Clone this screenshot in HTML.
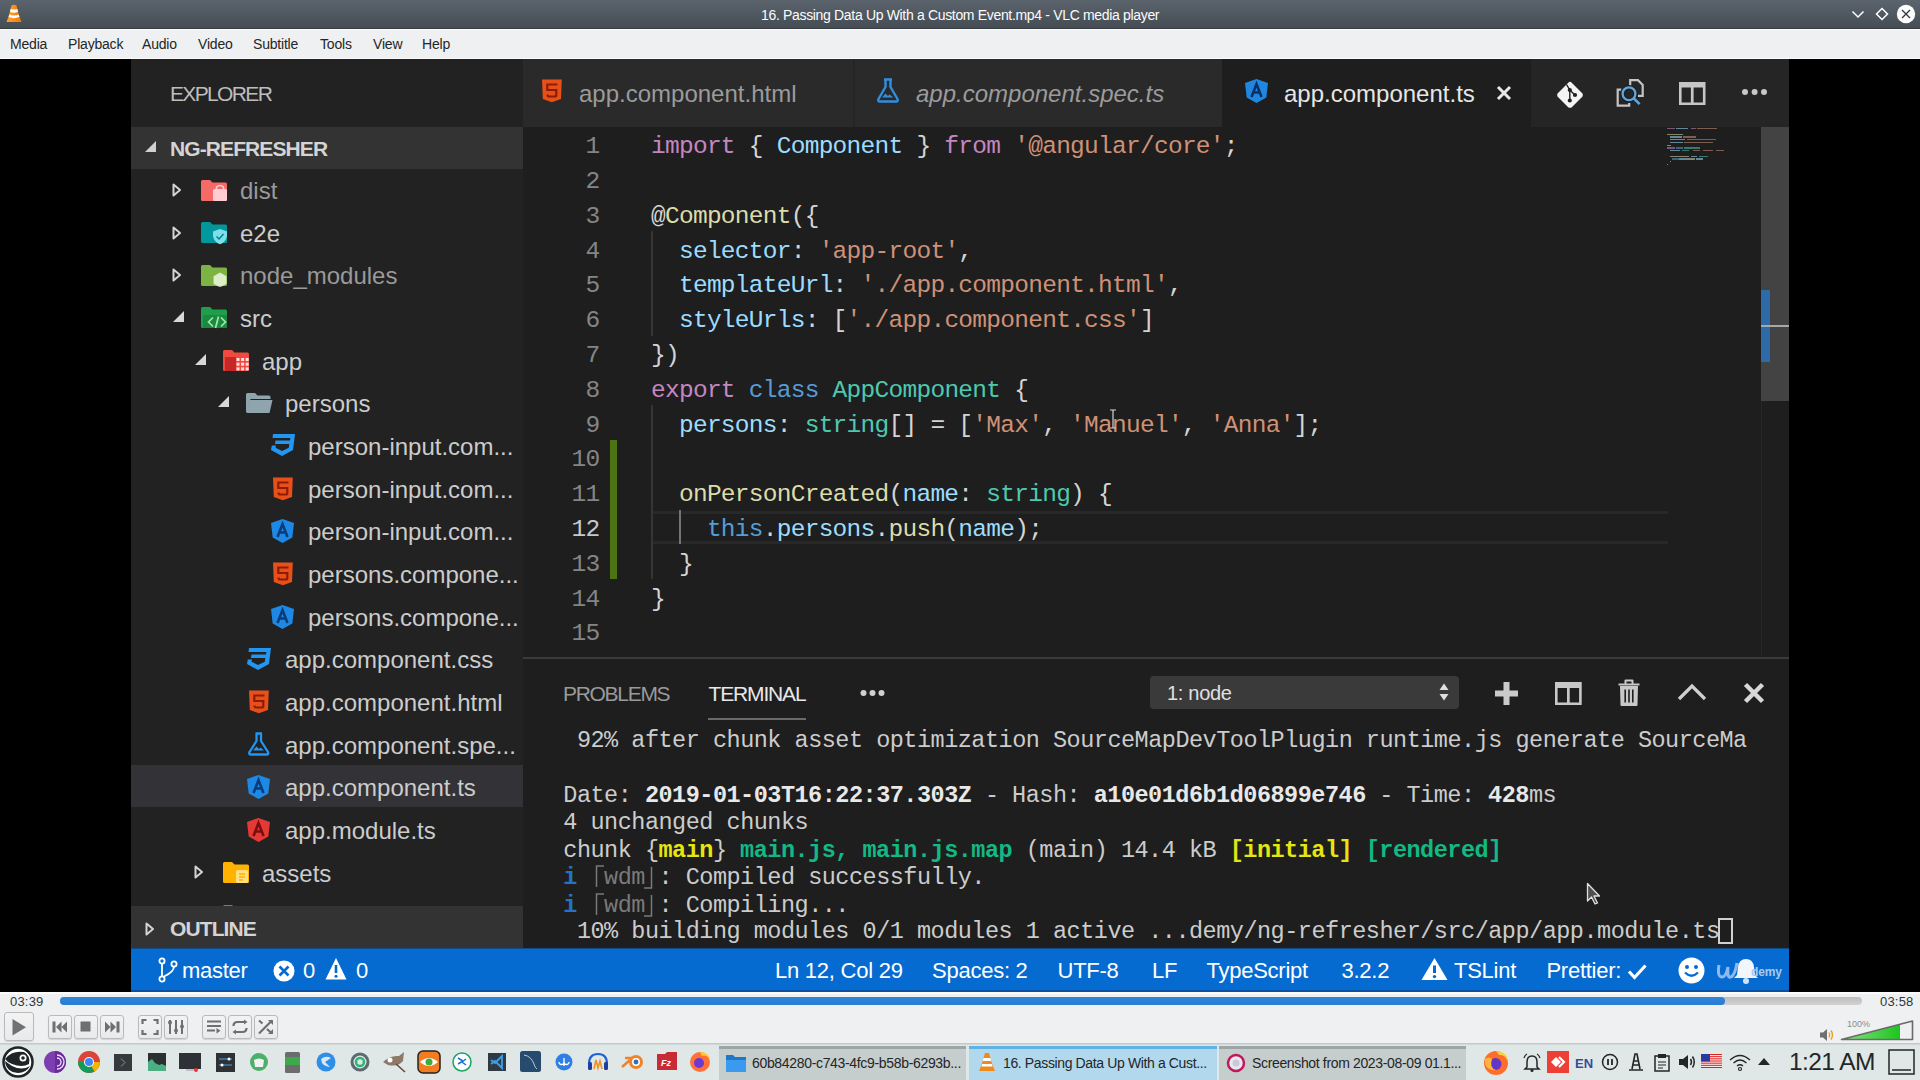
<!DOCTYPE html>
<html><head><meta charset="utf-8">
<style>
*{margin:0;padding:0;box-sizing:border-box}
html,body{width:1920px;height:1080px;overflow:hidden;background:#000;position:relative}
.a{position:absolute;white-space:pre}
.t{font-kerning:normal}
svg.a{overflow:visible}
</style></head><body>
<div class="a" style="left:0px;top:0px;width:1920px;height:29px;background:linear-gradient(#5b646d,#444b53);"></div>
<div class="a" style="left:0px;top:28px;width:1920px;height:1px;background:#383e44;"></div>
<svg class="a" style="left:5px;top:4px;" width="18" height="20" viewBox="0 0 18 20"><defs><linearGradient id="cg" x1="0" x2="1"><stop offset="0" stop-color="#ffa23a"/><stop offset="1" stop-color="#f07a00"/></linearGradient></defs>
<path d="M1.5 18 L4 11.5 L14 11.5 L16.5 18 Z" fill="url(#cg)"/>
<path d="M6.5 1.5 Q9 0 11.5 1.5 L14.5 13 Q9 16 3.5 13 Z" fill="url(#cg)"/>
<path d="M5.7 5 Q9 6.2 12.3 5 L13 8 Q9 9.5 5 8 Z" fill="#fff"/>
<path d="M4.3 10.5 Q9 12.3 13.7 10.5 L14.3 13 Q9 15.3 3.7 13 Z" fill="#fff"/></svg>
<div class="a t" style="left:761px;top:7.65px;font-family:'Liberation Sans',sans-serif;font-size:14px;line-height:14px;color:#fcfcfc;font-weight:normal;letter-spacing:-0.33px;">16. Passing Data Up With a Custom Event.mp4 - VLC media player</div>
<svg class="a" style="left:1850px;top:8px;" width="16" height="12" viewBox="0 0 16 12"><path d="M2.5 3.5 L8 9 L13.5 3.5" stroke="#fff" stroke-width="1.5" fill="none"/></svg>
<svg class="a" style="left:1875px;top:7px;" width="14" height="14" viewBox="0 0 14 14"><path d="M7 1.5 L12.5 7 L7 12.5 L1.5 7 Z" stroke="#fff" stroke-width="1.5" fill="none"/></svg>
<svg class="a" style="left:1896px;top:4px;" width="20" height="20" viewBox="0 0 20 20"><circle cx="10" cy="10" r="9.2" fill="#fcfcfc"/><path d="M6 6 L14 14 M14 6 L6 14" stroke="#31363b" stroke-width="1.3"/></svg>
<div class="a" style="left:0px;top:29px;width:1920px;height:30px;background:#eff0f1;border-top:1px solid #fbfbfb;border-bottom:1px solid #fbfbfb;"></div>
<div class="a t" style="left:10px;top:37.15px;font-family:'Liberation Sans',sans-serif;font-size:14px;line-height:14px;color:#232627;font-weight:normal;letter-spacing:-0.2px;">Media</div>
<div class="a t" style="left:68px;top:37.15px;font-family:'Liberation Sans',sans-serif;font-size:14px;line-height:14px;color:#232627;font-weight:normal;letter-spacing:-0.2px;">Playback</div>
<div class="a t" style="left:142px;top:37.15px;font-family:'Liberation Sans',sans-serif;font-size:14px;line-height:14px;color:#232627;font-weight:normal;letter-spacing:-0.2px;">Audio</div>
<div class="a t" style="left:198px;top:37.15px;font-family:'Liberation Sans',sans-serif;font-size:14px;line-height:14px;color:#232627;font-weight:normal;letter-spacing:-0.2px;">Video</div>
<div class="a t" style="left:253px;top:37.15px;font-family:'Liberation Sans',sans-serif;font-size:14px;line-height:14px;color:#232627;font-weight:normal;letter-spacing:-0.2px;">Subtitle</div>
<div class="a t" style="left:320px;top:37.15px;font-family:'Liberation Sans',sans-serif;font-size:14px;line-height:14px;color:#232627;font-weight:normal;letter-spacing:-0.2px;">Tools</div>
<div class="a t" style="left:373px;top:37.15px;font-family:'Liberation Sans',sans-serif;font-size:14px;line-height:14px;color:#232627;font-weight:normal;letter-spacing:-0.2px;">View</div>
<div class="a t" style="left:422px;top:37.15px;font-family:'Liberation Sans',sans-serif;font-size:14px;line-height:14px;color:#232627;font-weight:normal;letter-spacing:-0.2px;">Help</div>
<div class="a" style="left:131px;top:59px;width:392px;height:889px;background:#222222;"></div>
<div class="a t" style="left:170px;top:83.12px;font-family:'Liberation Sans',sans-serif;font-size:21px;line-height:21px;color:#bdbdbd;font-weight:normal;letter-spacing:-1.65px;">EXPLORER</div>
<div class="a" style="left:131px;top:127px;width:392px;height:42px;background:#333333;"></div>
<svg class="a" style="left:145px;top:141px;" width="12" height="12" viewBox="0 0 12 12"><path d="M11 0 L11 11 L0 11 Z" fill="#d0d0d0"/></svg>
<div class="a t" style="left:170px;top:138.22px;font-family:'Liberation Sans',sans-serif;font-size:21px;line-height:21px;color:#d4d4d4;font-weight:bold;letter-spacing:-0.9px;">NG-REFRESHER</div>
<svg class="a" style="left:172px;top:183.0px;" width="10" height="14" viewBox="0 0 10 14"><path d="M1.5 1.5 L8 7 L1.5 12.5 Z" stroke="#d4d4d4" stroke-width="2" fill="none" stroke-linejoin="round"/></svg>
<svg class="a" style="left:200px;top:178.5px;clip-path:inset(0 0 0 0)" width="28" height="23" viewBox="0 0 28 23"><path d="M1 2.5 Q1 1 2.5 1 L10 1 L12.5 3.5 L25.5 3.5 Q27 3.5 27 5 L27 20.5 Q27 22 25.5 22 L2.5 22 Q1 22 1 20.5 Z" fill="#f56a66"/><rect x="13" y="10" width="14" height="12" rx="1.5" fill="#ffcdd2"/><path d="M16.5 10 L16.5 8 Q20 5 23.5 8 L23.5 10" stroke="#ffcdd2" stroke-width="1.6" fill="none"/></svg>
<div class="a t" style="left:240px;top:179.18px;font-family:'Liberation Sans',sans-serif;font-size:24px;line-height:24px;color:#9a9a9a;font-weight:normal;letter-spacing:0px;">dist</div>
<svg class="a" style="left:172px;top:225.65px;" width="10" height="14" viewBox="0 0 10 14"><path d="M1.5 1.5 L8 7 L1.5 12.5 Z" stroke="#d4d4d4" stroke-width="2" fill="none" stroke-linejoin="round"/></svg>
<svg class="a" style="left:200px;top:221.15px;clip-path:inset(0 0 0 0)" width="28" height="23" viewBox="0 0 28 23"><path d="M1 2.5 Q1 1 2.5 1 L10 1 L12.5 3.5 L25.5 3.5 Q27 3.5 27 5 L27 20.5 Q27 22 25.5 22 L2.5 22 Q1 22 1 20.5 Z" fill="#00979d"/><path d="M20 8 L27 10.5 L27 15 Q26 21 20 23.5 Q14 21 13 15 L13 10.5 Z" fill="#80deea"/><path d="M16.5 15.5 L19 18 L23.5 13" stroke="#00838f" stroke-width="1.5" fill="none"/></svg>
<div class="a t" style="left:240px;top:221.83px;font-family:'Liberation Sans',sans-serif;font-size:24px;line-height:24px;color:#cccccc;font-weight:normal;letter-spacing:0px;">e2e</div>
<svg class="a" style="left:172px;top:268.3px;" width="10" height="14" viewBox="0 0 10 14"><path d="M1.5 1.5 L8 7 L1.5 12.5 Z" stroke="#d4d4d4" stroke-width="2" fill="none" stroke-linejoin="round"/></svg>
<svg class="a" style="left:200px;top:263.8px;clip-path:inset(0 0 0 0)" width="28" height="23" viewBox="0 0 28 23"><path d="M1 2.5 Q1 1 2.5 1 L10 1 L12.5 3.5 L25.5 3.5 Q27 3.5 27 5 L27 20.5 Q27 22 25.5 22 L2.5 22 Q1 22 1 20.5 Z" fill="#7cb342"/><path d="M20 8.5 L26.5 12.3 L26.5 19.7 L20 23.5 L13.5 19.7 L13.5 12.3 Z" fill="#dcedc8"/></svg>
<div class="a t" style="left:240px;top:264.48px;font-family:'Liberation Sans',sans-serif;font-size:24px;line-height:24px;color:#9a9a9a;font-weight:normal;letter-spacing:0px;">node_modules</div>
<svg class="a" style="left:173px;top:310.95px;" width="12" height="12" viewBox="0 0 12 12"><path d="M11 0 L11 11 L0 11 Z" fill="#d8d8d8"/></svg>
<svg class="a" style="left:200px;top:306.45px;clip-path:inset(0 0 0 0)" width="28" height="23" viewBox="0 0 28 23"><path d="M1 2.5 Q1 1 2.5 1 L10 1 L12.5 3.5 L25.5 3.5 Q27 3.5 27 5 L27 20.5 Q27 22 25.5 22 L2.5 22 Q1 22 1 20.5 Z" fill="#1f9e4b"/><path d="M3 9 L27 9 L27 22 L3 22 Z" fill="#1b8a41"/><path d="M13 11.5 L8.5 16 L13 20.5 M21 11.5 L25.5 16 L21 20.5 M18.5 10.5 L15.5 22" stroke="#a5e6a8" stroke-width="1.7" fill="none"/></svg>
<div class="a t" style="left:240px;top:307.13px;font-family:'Liberation Sans',sans-serif;font-size:24px;line-height:24px;color:#cccccc;font-weight:normal;letter-spacing:0px;">src</div>
<svg class="a" style="left:195px;top:353.6px;" width="12" height="12" viewBox="0 0 12 12"><path d="M11 0 L11 11 L0 11 Z" fill="#d8d8d8"/></svg>
<svg class="a" style="left:222px;top:349.1px;clip-path:inset(0 0 0 0)" width="28" height="23" viewBox="0 0 28 23"><path d="M1 2.5 Q1 1 2.5 1 L10 1 L12.5 3.5 L25.5 3.5 Q27 3.5 27 5 L27 20.5 Q27 22 25.5 22 L2.5 22 Q1 22 1 20.5 Z" fill="#ef4a3f"/><path d="M3 8 L14 8 L14 22 L3 22 Z" fill="#c62828"/><rect x="14.5" y="9.0" width="3" height="3" fill="#ffe0e0"/><rect x="19.1" y="9.0" width="3" height="3" fill="#ffe0e0"/><rect x="23.7" y="9.0" width="3" height="3" fill="#ffe0e0"/><rect x="14.5" y="13.7" width="3" height="3" fill="#ffe0e0"/><rect x="19.1" y="13.7" width="3" height="3" fill="#ffe0e0"/><rect x="23.7" y="13.7" width="3" height="3" fill="#ffe0e0"/><rect x="14.5" y="18.4" width="3" height="3" fill="#ffe0e0"/><rect x="19.1" y="18.4" width="3" height="3" fill="#ffe0e0"/><rect x="23.7" y="18.4" width="3" height="3" fill="#ffe0e0"/></svg>
<div class="a t" style="left:262px;top:349.78px;font-family:'Liberation Sans',sans-serif;font-size:24px;line-height:24px;color:#cccccc;font-weight:normal;letter-spacing:0px;">app</div>
<svg class="a" style="left:218px;top:396.25px;" width="12" height="12" viewBox="0 0 12 12"><path d="M11 0 L11 11 L0 11 Z" fill="#d8d8d8"/></svg>
<svg class="a" style="left:245px;top:392.25px;" width="28" height="22" viewBox="0 0 28 22"><path d="M1 2.5 Q1 1 2.5 1 L10 1 L12.5 3.5 L24 3.5 Q25.5 3.5 25.5 5 L25.5 7 L5.5 7 L2.5 20 L1 20 Z" fill="#90a4ae"/><path d="M5 8 L27.5 8 L24.5 21 L1.5 21 Z" fill="#90a4ae"/></svg>
<div class="a t" style="left:285px;top:392.43px;font-family:'Liberation Sans',sans-serif;font-size:24px;line-height:24px;color:#cccccc;font-weight:normal;letter-spacing:0px;">persons</div>
<svg class="a" style="left:270px;top:434.4px;" width="26" height="23" viewBox="0 0 26 23"><path d="M3 0 L25 0 L23 16 L12 22 L1 16 L1.8 11.5 L6 11.5 L5.6 13.8 L12 17 L18.8 13.8 L19.3 10 L5 10 L5.5 6.5 L20 6.5 L20.4 4 L2.5 4 Z" fill="#2196f3"/></svg>
<div class="a t" style="left:308px;top:435.08px;font-family:'Liberation Sans',sans-serif;font-size:24px;line-height:24px;color:#cccccc;font-weight:normal;letter-spacing:0px;">person-input.com...</div>
<svg class="a" style="left:272px;top:476.55px;" width="23" height="24" viewBox="0 0 23 24"><path d="M1 0.6 L20.8 0.6 L20 20 L10.9 23.3 L1.8 20 Z" fill="#e8501a"/><path d="M16.5 5.5 L6.3 5.5 L6.3 11 L15.3 11 L15.3 16 Q15.3 17.5 13.5 17.5 L8.3 17.5 Q6.5 17.5 6.5 15.5" stroke="#8d1c02" stroke-width="2.2" fill="none"/></svg>
<div class="a t" style="left:308px;top:477.73px;font-family:'Liberation Sans',sans-serif;font-size:24px;line-height:24px;color:#cccccc;font-weight:normal;letter-spacing:0px;">person-input.com...</div>
<svg class="a" style="left:271px;top:519.2px;" width="23" height="24" viewBox="0 0 23 24"><path d="M11.5 0 L23 4 L21.3 18.5 L11.5 24 L1.7 18.5 L0 4 Z" fill="#1e88e5"/><path d="M6.5 18 L11.5 5 L16.5 18 M8.3 13.5 L14.7 13.5" stroke="#0a3d7a" stroke-width="2.6" fill="none"/></svg>
<div class="a t" style="left:308px;top:520.38px;font-family:'Liberation Sans',sans-serif;font-size:24px;line-height:24px;color:#cccccc;font-weight:normal;letter-spacing:0px;">person-input.com...</div>
<svg class="a" style="left:272px;top:561.8499999999999px;" width="23" height="24" viewBox="0 0 23 24"><path d="M1 0.6 L20.8 0.6 L20 20 L10.9 23.3 L1.8 20 Z" fill="#e8501a"/><path d="M16.5 5.5 L6.3 5.5 L6.3 11 L15.3 11 L15.3 16 Q15.3 17.5 13.5 17.5 L8.3 17.5 Q6.5 17.5 6.5 15.5" stroke="#8d1c02" stroke-width="2.2" fill="none"/></svg>
<div class="a t" style="left:308px;top:563.03px;font-family:'Liberation Sans',sans-serif;font-size:24px;line-height:24px;color:#cccccc;font-weight:normal;letter-spacing:0px;">persons.compone...</div>
<svg class="a" style="left:271px;top:604.5px;" width="23" height="24" viewBox="0 0 23 24"><path d="M11.5 0 L23 4 L21.3 18.5 L11.5 24 L1.7 18.5 L0 4 Z" fill="#1e88e5"/><path d="M6.5 18 L11.5 5 L16.5 18 M8.3 13.5 L14.7 13.5" stroke="#0a3d7a" stroke-width="2.6" fill="none"/></svg>
<div class="a t" style="left:308px;top:605.68px;font-family:'Liberation Sans',sans-serif;font-size:24px;line-height:24px;color:#cccccc;font-weight:normal;letter-spacing:0px;">persons.compone...</div>
<svg class="a" style="left:246px;top:647.65px;" width="26" height="23" viewBox="0 0 26 23"><path d="M3 0 L25 0 L23 16 L12 22 L1 16 L1.8 11.5 L6 11.5 L5.6 13.8 L12 17 L18.8 13.8 L19.3 10 L5 10 L5.5 6.5 L20 6.5 L20.4 4 L2.5 4 Z" fill="#2196f3"/></svg>
<div class="a t" style="left:285px;top:648.33px;font-family:'Liberation Sans',sans-serif;font-size:24px;line-height:24px;color:#cccccc;font-weight:normal;letter-spacing:0px;">app.component.css</div>
<svg class="a" style="left:248px;top:689.8px;" width="23" height="24" viewBox="0 0 23 24"><path d="M1 0.6 L20.8 0.6 L20 20 L10.9 23.3 L1.8 20 Z" fill="#e8501a"/><path d="M16.5 5.5 L6.3 5.5 L6.3 11 L15.3 11 L15.3 16 Q15.3 17.5 13.5 17.5 L8.3 17.5 Q6.5 17.5 6.5 15.5" stroke="#8d1c02" stroke-width="2.2" fill="none"/></svg>
<div class="a t" style="left:285px;top:690.98px;font-family:'Liberation Sans',sans-serif;font-size:24px;line-height:24px;color:#cccccc;font-weight:normal;letter-spacing:0px;">app.component.html</div>
<svg class="a" style="left:247px;top:732.4499999999999px;" width="23" height="24" viewBox="0 0 23 24"><path d="M8.5 1.5 L15 1.5 M9.5 1.5 L9.5 9 L2.5 20 Q1.5 22.5 4 22.5 L19.5 22.5 Q22 22.5 21 20 L14 9 L14 1.5" stroke="#2196f3" stroke-width="2.3" fill="none" stroke-linejoin="round"/><path d="M6 18.5 L9.5 14.5 L12 17 L13.5 15.5 L17 18.5 Z" fill="#2196f3"/></svg>
<div class="a t" style="left:285px;top:733.63px;font-family:'Liberation Sans',sans-serif;font-size:24px;line-height:24px;color:#cccccc;font-weight:normal;letter-spacing:0px;">app.component.spe...</div>
<div class="a" style="left:131px;top:765px;width:392px;height:42px;background:#333337;"></div>
<svg class="a" style="left:247px;top:775.1px;" width="23" height="24" viewBox="0 0 23 24"><path d="M11.5 0 L23 4 L21.3 18.5 L11.5 24 L1.7 18.5 L0 4 Z" fill="#1e88e5"/><path d="M6.5 18 L11.5 5 L16.5 18 M8.3 13.5 L14.7 13.5" stroke="#0a3d7a" stroke-width="2.6" fill="none"/></svg>
<div class="a t" style="left:285px;top:776.28px;font-family:'Liberation Sans',sans-serif;font-size:24px;line-height:24px;color:#cccccc;font-weight:normal;letter-spacing:0px;">app.component.ts</div>
<svg class="a" style="left:247px;top:817.75px;" width="23" height="24" viewBox="0 0 23 24"><path d="M11.5 0 L23 4 L21.3 18.5 L11.5 24 L1.7 18.5 L0 4 Z" fill="#e53935"/><path d="M6.5 18 L11.5 5 L16.5 18 M8.3 13.5 L14.7 13.5" stroke="#7a0d0d" stroke-width="2.6" fill="none"/></svg>
<div class="a t" style="left:285px;top:818.93px;font-family:'Liberation Sans',sans-serif;font-size:24px;line-height:24px;color:#cccccc;font-weight:normal;letter-spacing:0px;">app.module.ts</div>
<svg class="a" style="left:194px;top:865.4px;" width="10" height="14" viewBox="0 0 10 14"><path d="M1.5 1.5 L8 7 L1.5 12.5 Z" stroke="#d4d4d4" stroke-width="2" fill="none" stroke-linejoin="round"/></svg>
<svg class="a" style="left:222px;top:860.9px;clip-path:inset(0 0 0 0)" width="28" height="23" viewBox="0 0 28 23"><path d="M1 2.5 Q1 1 2.5 1 L10 1 L12.5 3.5 L25.5 3.5 Q27 3.5 27 5 L27 20.5 Q27 22 25.5 22 L2.5 22 Q1 22 1 20.5 Z" fill="#ffb300"/><rect x="14" y="9" width="12" height="13" rx="1.5" fill="#ffe082"/><path d="M17 13 L23 13 M17 16 L23 16 M17 19 L21 19" stroke="#ffb300" stroke-width="1.3"/></svg>
<div class="a t" style="left:262px;top:861.58px;font-family:'Liberation Sans',sans-serif;font-size:24px;line-height:24px;color:#cccccc;font-weight:normal;letter-spacing:0px;">assets</div>
<svg class="a" style="left:194px;top:908.05px;" width="10" height="14" viewBox="0 0 10 14"><path d="M1.5 1.5 L8 7 L1.5 12.5 Z" stroke="#d4d4d4" stroke-width="2" fill="none" stroke-linejoin="round"/></svg>
<svg class="a" style="left:222px;top:903.55px;" width="28" height="23" viewBox="0 0 28 23"><path d="M1 2.5 Q1 1 2.5 1 L10 1 L12.5 3.5 L25.5 3.5 Q27 3.5 27 5 L27 20.5 Q27 22 25.5 22 L2.5 22 Q1 22 1 20.5 Z" fill="#43a047"/></svg>
<div class="a t" style="left:262px;top:904.23px;font-family:'Liberation Sans',sans-serif;font-size:24px;line-height:24px;color:#cccccc;font-weight:normal;letter-spacing:0px;">environments</div>
<div class="a" style="left:131px;top:906px;width:392px;height:42px;background:#333333;"></div>
<svg class="a" style="left:145px;top:922px;" width="10" height="14" viewBox="0 0 10 14"><path d="M1.5 1.5 L8 7 L1.5 12.5 Z" stroke="#d4d4d4" stroke-width="2" fill="none" stroke-linejoin="round"/></svg>
<div class="a t" style="left:170px;top:917.62px;font-family:'Liberation Sans',sans-serif;font-size:21px;line-height:21px;color:#d4d4d4;font-weight:bold;letter-spacing:-0.9px;">OUTLINE</div>
<div class="a" style="left:523px;top:59px;width:1266px;height:68px;background:#252526;"></div>
<div class="a" style="left:523px;top:59px;width:330px;height:68px;background:#2a2a2a;"></div>
<div class="a" style="left:853px;top:59px;width:2px;height:68px;background:#242424;"></div>
<div class="a" style="left:855px;top:59px;width:367px;height:68px;background:#2a2a2a;"></div>
<div class="a" style="left:1222px;top:59px;width:309px;height:68px;background:#1e1e1e;"></div>
<svg class="a" style="left:541px;top:79px;" width="23" height="24" viewBox="0 0 23 24"><path d="M1 0.6 L20.8 0.6 L20 20 L10.9 23.3 L1.8 20 Z" fill="#e8501a"/><path d="M16.5 5.5 L6.3 5.5 L6.3 11 L15.3 11 L15.3 16 Q15.3 17.5 13.5 17.5 L8.3 17.5 Q6.5 17.5 6.5 15.5" stroke="#8d1c02" stroke-width="2.2" fill="none"/></svg>
<div class="a t" style="left:579px;top:82.48px;font-family:'Liberation Sans',sans-serif;font-size:24px;line-height:24px;color:#9b9b9b;font-weight:normal;letter-spacing:0px;">app.component.html</div>
<svg class="a" style="left:876px;top:78px;" width="24" height="26" viewBox="0 0 24 26"><path d="M8 1.5 L16 1.5 M9.5 1.5 L9.5 9 L2.5 21 Q1.5 23.5 4 23.5 L20 23.5 Q22.5 23.5 21.5 21 L14.5 9 L14.5 1.5" stroke="#2f8fe0" stroke-width="2.4" fill="none" stroke-linejoin="round"/><path d="M6 19.5 L9.5 15.5 L12 18 L13.5 16.5 L17.5 19.5 Z" fill="#2f8fe0"/></svg>
<div class="a t" style="left:916px;top:82.48px;font-family:'Liberation Sans',sans-serif;font-size:24px;line-height:24px;color:#9b9b9b;font-weight:normal;letter-spacing:0px;font-style:italic;">app.component.spec.ts</div>
<svg class="a" style="left:1245px;top:79px;" width="23" height="25" viewBox="0 0 23 25"><path d="M11.5 0 L23 4 L21.3 18.5 L11.5 24 L1.7 18.5 L0 4 Z" fill="#1f87e0"/><path d="M6.5 18 L11.5 5 L16.5 18 M8.3 13.5 L14.7 13.5" stroke="#0b2f66" stroke-width="2.6" fill="none"/></svg>
<div class="a t" style="left:1284px;top:82.48px;font-family:'Liberation Sans',sans-serif;font-size:24px;line-height:24px;color:#e6e6e6;font-weight:normal;letter-spacing:0px;">app.component.ts</div>
<svg class="a" style="left:1496px;top:85px;" width="16" height="16" viewBox="0 0 16 16"><path d="M2 2 L14 14 M14 2 L2 14" stroke="#e8e8e8" stroke-width="3"/></svg>
<svg class="a" style="left:1556px;top:81px;" width="28" height="28" viewBox="0 0 28 28"><path d="M14 0.8 Q14.8 0.8 15.5 1.5 L26.5 12.5 Q27.2 14 26.5 15.5 L15.5 26.5 Q14 27.2 12.5 26.5 L1.5 15.5 Q0.8 14 1.5 12.5 L12.5 1.5 Q13.2 0.8 14 0.8 Z" fill="#f4f4f4"/><path d="M10.5 3.5 L13.8 9 L13.8 19.5 M13.8 9 L19 14" stroke="#222" stroke-width="1.4" fill="none"/><circle cx="13.8" cy="9" r="2.1" fill="#222"/><circle cx="13.8" cy="19.5" r="2.1" fill="#222"/><circle cx="19" cy="14" r="2.1" fill="#222"/></svg>
<svg class="a" style="left:1615px;top:79px;" width="30" height="28" viewBox="0 0 30 28"><path d="M15.2 6.4 L15.2 1.2 L23 1.2 L27.7 5.9 L27.7 16.8 L23 16.8 M6.4 10.6 L2.7 10.6 L2.7 26.7 L14.2 26.7 L14.2 24.1" stroke="#c4c4c4" stroke-width="2.2" fill="none"/><circle cx="14" cy="14.7" r="6.4" stroke="#1f1f1f" stroke-width="4.5" fill="none"/><circle cx="14" cy="14.7" r="6.4" stroke="#5ea6e0" stroke-width="2.3" fill="none"/><path d="M18.8 19.4 L24.6 25.2" stroke="#5ea6e0" stroke-width="2.6"/></svg>
<svg class="a" style="left:1679px;top:81.6px;" width="27" height="23" viewBox="0 0 27 23"><path fill-rule="evenodd" d="M0 0 H26.5 V23 H0 Z M2.6 5.6 V20.4 H11.9 V5.6 Z M14.6 5.6 V20.4 H23.9 V5.6 Z" fill="#c6c6c6"/></svg>
<svg class="a" style="left:1741px;top:86px;" width="28" height="12" viewBox="0 0 28 12"><circle cx="4" cy="6" r="3" fill="#c8c8c8"/><circle cx="13.6" cy="6" r="3" fill="#c8c8c8"/><circle cx="23" cy="6" r="3" fill="#c8c8c8"/></svg>
<div class="a" style="left:523px;top:127px;width:1266px;height:530px;background:#1e1e1e;"></div>
<div class="a" style="left:651px;top:510.5px;width:1017px;height:3px;background:#282828;"></div>
<div class="a" style="left:651px;top:541px;width:1017px;height:3px;background:#282828;"></div>
<div class="a" style="left:651px;top:231.39999999999998px;width:2px;height:104.39999999999999px;background:#353535;"></div>
<div class="a" style="left:651px;top:405.4px;width:2px;height:174.0px;background:#353535;"></div>
<div class="a" style="left:679px;top:510px;width:2px;height:34px;background:#737373;"></div>
<div class="a" style="left:610px;top:440.2px;width:7px;height:139.2px;background:#4d7413;"></div>
<div class="a t" style="left:585.53px;top:135.12px;font-family:'Liberation Mono',monospace;font-size:24.5px;line-height:24.5px;color:#858585;font-weight:normal;letter-spacing:-0.73px;">1</div>
<div class="a t" style="left:651px;top:135.12px;font-family:'Liberation Mono',monospace;font-size:24.5px;line-height:24.5px;color:#c586c0;font-weight:normal;letter-spacing:-0.73px;">import</div>
<div class="a t" style="left:734.82px;top:135.12px;font-family:'Liberation Mono',monospace;font-size:24.5px;line-height:24.5px;color:#d4d4d4;font-weight:normal;letter-spacing:-0.73px;"> { </div>
<div class="a t" style="left:776.73px;top:135.12px;font-family:'Liberation Mono',monospace;font-size:24.5px;line-height:24.5px;color:#9cdcfe;font-weight:normal;letter-spacing:-0.73px;">Component</div>
<div class="a t" style="left:902.46px;top:135.12px;font-family:'Liberation Mono',monospace;font-size:24.5px;line-height:24.5px;color:#d4d4d4;font-weight:normal;letter-spacing:-0.73px;"> } </div>
<div class="a t" style="left:944.37px;top:135.12px;font-family:'Liberation Mono',monospace;font-size:24.5px;line-height:24.5px;color:#c586c0;font-weight:normal;letter-spacing:-0.73px;">from</div>
<div class="a t" style="left:1000.25px;top:135.12px;font-family:'Liberation Mono',monospace;font-size:24.5px;line-height:24.5px;color:#d4d4d4;font-weight:normal;letter-spacing:-0.73px;"> </div>
<div class="a t" style="left:1014.22px;top:135.12px;font-family:'Liberation Mono',monospace;font-size:24.5px;line-height:24.5px;color:#ce9178;font-weight:normal;letter-spacing:-0.73px;">&#x27;@angular/core&#x27;</div>
<div class="a t" style="left:1223.77px;top:135.12px;font-family:'Liberation Mono',monospace;font-size:24.5px;line-height:24.5px;color:#d4d4d4;font-weight:normal;letter-spacing:-0.73px;">;</div>
<div class="a t" style="left:585.53px;top:169.92px;font-family:'Liberation Mono',monospace;font-size:24.5px;line-height:24.5px;color:#858585;font-weight:normal;letter-spacing:-0.73px;">2</div>
<div class="a t" style="left:585.53px;top:204.72px;font-family:'Liberation Mono',monospace;font-size:24.5px;line-height:24.5px;color:#858585;font-weight:normal;letter-spacing:-0.73px;">3</div>
<div class="a t" style="left:651px;top:204.72px;font-family:'Liberation Mono',monospace;font-size:24.5px;line-height:24.5px;color:#d4d4d4;font-weight:normal;letter-spacing:-0.73px;">@</div>
<div class="a t" style="left:664.97px;top:204.72px;font-family:'Liberation Mono',monospace;font-size:24.5px;line-height:24.5px;color:#dcdcaa;font-weight:normal;letter-spacing:-0.73px;">Component</div>
<div class="a t" style="left:790.7px;top:204.72px;font-family:'Liberation Mono',monospace;font-size:24.5px;line-height:24.5px;color:#d4d4d4;font-weight:normal;letter-spacing:-0.73px;">({</div>
<div class="a t" style="left:585.53px;top:239.52px;font-family:'Liberation Mono',monospace;font-size:24.5px;line-height:24.5px;color:#858585;font-weight:normal;letter-spacing:-0.73px;">4</div>
<div class="a t" style="left:651px;top:239.52px;font-family:'Liberation Mono',monospace;font-size:24.5px;line-height:24.5px;color:#9cdcfe;font-weight:normal;letter-spacing:-0.73px;">  selector</div>
<div class="a t" style="left:790.7px;top:239.52px;font-family:'Liberation Mono',monospace;font-size:24.5px;line-height:24.5px;color:#d4d4d4;font-weight:normal;letter-spacing:-0.73px;">: </div>
<div class="a t" style="left:818.64px;top:239.52px;font-family:'Liberation Mono',monospace;font-size:24.5px;line-height:24.5px;color:#ce9178;font-weight:normal;letter-spacing:-0.73px;">&#x27;app-root&#x27;</div>
<div class="a t" style="left:958.34px;top:239.52px;font-family:'Liberation Mono',monospace;font-size:24.5px;line-height:24.5px;color:#d4d4d4;font-weight:normal;letter-spacing:-0.73px;">,</div>
<div class="a t" style="left:585.53px;top:274.32px;font-family:'Liberation Mono',monospace;font-size:24.5px;line-height:24.5px;color:#858585;font-weight:normal;letter-spacing:-0.73px;">5</div>
<div class="a t" style="left:651px;top:274.32px;font-family:'Liberation Mono',monospace;font-size:24.5px;line-height:24.5px;color:#9cdcfe;font-weight:normal;letter-spacing:-0.73px;">  templateUrl</div>
<div class="a t" style="left:832.61px;top:274.32px;font-family:'Liberation Mono',monospace;font-size:24.5px;line-height:24.5px;color:#d4d4d4;font-weight:normal;letter-spacing:-0.73px;">: </div>
<div class="a t" style="left:860.55px;top:274.32px;font-family:'Liberation Mono',monospace;font-size:24.5px;line-height:24.5px;color:#ce9178;font-weight:normal;letter-spacing:-0.73px;">&#x27;./app.component.html&#x27;</div>
<div class="a t" style="left:1167.89px;top:274.32px;font-family:'Liberation Mono',monospace;font-size:24.5px;line-height:24.5px;color:#d4d4d4;font-weight:normal;letter-spacing:-0.73px;">,</div>
<div class="a t" style="left:585.53px;top:309.12px;font-family:'Liberation Mono',monospace;font-size:24.5px;line-height:24.5px;color:#858585;font-weight:normal;letter-spacing:-0.73px;">6</div>
<div class="a t" style="left:651px;top:309.12px;font-family:'Liberation Mono',monospace;font-size:24.5px;line-height:24.5px;color:#9cdcfe;font-weight:normal;letter-spacing:-0.73px;">  styleUrls</div>
<div class="a t" style="left:804.67px;top:309.12px;font-family:'Liberation Mono',monospace;font-size:24.5px;line-height:24.5px;color:#d4d4d4;font-weight:normal;letter-spacing:-0.73px;">: [</div>
<div class="a t" style="left:846.58px;top:309.12px;font-family:'Liberation Mono',monospace;font-size:24.5px;line-height:24.5px;color:#ce9178;font-weight:normal;letter-spacing:-0.73px;">&#x27;./app.component.css&#x27;</div>
<div class="a t" style="left:1139.95px;top:309.12px;font-family:'Liberation Mono',monospace;font-size:24.5px;line-height:24.5px;color:#d4d4d4;font-weight:normal;letter-spacing:-0.73px;">]</div>
<div class="a t" style="left:585.53px;top:343.92px;font-family:'Liberation Mono',monospace;font-size:24.5px;line-height:24.5px;color:#858585;font-weight:normal;letter-spacing:-0.73px;">7</div>
<div class="a t" style="left:651px;top:343.92px;font-family:'Liberation Mono',monospace;font-size:24.5px;line-height:24.5px;color:#d4d4d4;font-weight:normal;letter-spacing:-0.73px;">})</div>
<div class="a t" style="left:585.53px;top:378.72px;font-family:'Liberation Mono',monospace;font-size:24.5px;line-height:24.5px;color:#858585;font-weight:normal;letter-spacing:-0.73px;">8</div>
<div class="a t" style="left:651px;top:378.72px;font-family:'Liberation Mono',monospace;font-size:24.5px;line-height:24.5px;color:#c586c0;font-weight:normal;letter-spacing:-0.73px;">export</div>
<div class="a t" style="left:734.82px;top:378.72px;font-family:'Liberation Mono',monospace;font-size:24.5px;line-height:24.5px;color:#d4d4d4;font-weight:normal;letter-spacing:-0.73px;"> </div>
<div class="a t" style="left:748.79px;top:378.72px;font-family:'Liberation Mono',monospace;font-size:24.5px;line-height:24.5px;color:#569cd6;font-weight:normal;letter-spacing:-0.73px;">class</div>
<div class="a t" style="left:818.64px;top:378.72px;font-family:'Liberation Mono',monospace;font-size:24.5px;line-height:24.5px;color:#d4d4d4;font-weight:normal;letter-spacing:-0.73px;"> </div>
<div class="a t" style="left:832.61px;top:378.72px;font-family:'Liberation Mono',monospace;font-size:24.5px;line-height:24.5px;color:#4ec9b0;font-weight:normal;letter-spacing:-0.73px;">AppComponent</div>
<div class="a t" style="left:1000.25px;top:378.72px;font-family:'Liberation Mono',monospace;font-size:24.5px;line-height:24.5px;color:#d4d4d4;font-weight:normal;letter-spacing:-0.73px;"> {</div>
<div class="a t" style="left:585.53px;top:413.52px;font-family:'Liberation Mono',monospace;font-size:24.5px;line-height:24.5px;color:#858585;font-weight:normal;letter-spacing:-0.73px;">9</div>
<div class="a t" style="left:651px;top:413.52px;font-family:'Liberation Mono',monospace;font-size:24.5px;line-height:24.5px;color:#9cdcfe;font-weight:normal;letter-spacing:-0.73px;">  persons</div>
<div class="a t" style="left:776.73px;top:413.52px;font-family:'Liberation Mono',monospace;font-size:24.5px;line-height:24.5px;color:#d4d4d4;font-weight:normal;letter-spacing:-0.73px;">: </div>
<div class="a t" style="left:804.67px;top:413.52px;font-family:'Liberation Mono',monospace;font-size:24.5px;line-height:24.5px;color:#4ec9b0;font-weight:normal;letter-spacing:-0.73px;">string</div>
<div class="a t" style="left:888.49px;top:413.52px;font-family:'Liberation Mono',monospace;font-size:24.5px;line-height:24.5px;color:#d4d4d4;font-weight:normal;letter-spacing:-0.73px;">[] = [</div>
<div class="a t" style="left:972.31px;top:413.52px;font-family:'Liberation Mono',monospace;font-size:24.5px;line-height:24.5px;color:#ce9178;font-weight:normal;letter-spacing:-0.73px;">&#x27;Max&#x27;</div>
<div class="a t" style="left:1042.16px;top:413.52px;font-family:'Liberation Mono',monospace;font-size:24.5px;line-height:24.5px;color:#d4d4d4;font-weight:normal;letter-spacing:-0.73px;">, </div>
<div class="a t" style="left:1070.1px;top:413.52px;font-family:'Liberation Mono',monospace;font-size:24.5px;line-height:24.5px;color:#ce9178;font-weight:normal;letter-spacing:-0.73px;">&#x27;Manuel&#x27;</div>
<div class="a t" style="left:1181.86px;top:413.52px;font-family:'Liberation Mono',monospace;font-size:24.5px;line-height:24.5px;color:#d4d4d4;font-weight:normal;letter-spacing:-0.73px;">, </div>
<div class="a t" style="left:1209.8px;top:413.52px;font-family:'Liberation Mono',monospace;font-size:24.5px;line-height:24.5px;color:#ce9178;font-weight:normal;letter-spacing:-0.73px;">&#x27;Anna&#x27;</div>
<div class="a t" style="left:1293.62px;top:413.52px;font-family:'Liberation Mono',monospace;font-size:24.5px;line-height:24.5px;color:#d4d4d4;font-weight:normal;letter-spacing:-0.73px;">];</div>
<div class="a t" style="left:571.56px;top:448.32px;font-family:'Liberation Mono',monospace;font-size:24.5px;line-height:24.5px;color:#858585;font-weight:normal;letter-spacing:-0.73px;">10</div>
<div class="a t" style="left:571.56px;top:483.12px;font-family:'Liberation Mono',monospace;font-size:24.5px;line-height:24.5px;color:#858585;font-weight:normal;letter-spacing:-0.73px;">11</div>
<div class="a t" style="left:651px;top:483.12px;font-family:'Liberation Mono',monospace;font-size:24.5px;line-height:24.5px;color:#dcdcaa;font-weight:normal;letter-spacing:-0.73px;">  onPersonCreated</div>
<div class="a t" style="left:888.49px;top:483.12px;font-family:'Liberation Mono',monospace;font-size:24.5px;line-height:24.5px;color:#d4d4d4;font-weight:normal;letter-spacing:-0.73px;">(</div>
<div class="a t" style="left:902.46px;top:483.12px;font-family:'Liberation Mono',monospace;font-size:24.5px;line-height:24.5px;color:#9cdcfe;font-weight:normal;letter-spacing:-0.73px;">name</div>
<div class="a t" style="left:958.34px;top:483.12px;font-family:'Liberation Mono',monospace;font-size:24.5px;line-height:24.5px;color:#d4d4d4;font-weight:normal;letter-spacing:-0.73px;">: </div>
<div class="a t" style="left:986.28px;top:483.12px;font-family:'Liberation Mono',monospace;font-size:24.5px;line-height:24.5px;color:#4ec9b0;font-weight:normal;letter-spacing:-0.73px;">string</div>
<div class="a t" style="left:1070.1px;top:483.12px;font-family:'Liberation Mono',monospace;font-size:24.5px;line-height:24.5px;color:#d4d4d4;font-weight:normal;letter-spacing:-0.73px;">) {</div>
<div class="a t" style="left:571.56px;top:517.92px;font-family:'Liberation Mono',monospace;font-size:24.5px;line-height:24.5px;color:#c8c8c8;font-weight:normal;letter-spacing:-0.73px;">12</div>
<div class="a t" style="left:651px;top:517.92px;font-family:'Liberation Mono',monospace;font-size:24.5px;line-height:24.5px;color:#569cd6;font-weight:normal;letter-spacing:-0.73px;">    this</div>
<div class="a t" style="left:762.76px;top:517.92px;font-family:'Liberation Mono',monospace;font-size:24.5px;line-height:24.5px;color:#d4d4d4;font-weight:normal;letter-spacing:-0.73px;">.</div>
<div class="a t" style="left:776.73px;top:517.92px;font-family:'Liberation Mono',monospace;font-size:24.5px;line-height:24.5px;color:#9cdcfe;font-weight:normal;letter-spacing:-0.73px;">persons</div>
<div class="a t" style="left:874.52px;top:517.92px;font-family:'Liberation Mono',monospace;font-size:24.5px;line-height:24.5px;color:#d4d4d4;font-weight:normal;letter-spacing:-0.73px;">.</div>
<div class="a t" style="left:888.49px;top:517.92px;font-family:'Liberation Mono',monospace;font-size:24.5px;line-height:24.5px;color:#dcdcaa;font-weight:normal;letter-spacing:-0.73px;">push</div>
<div class="a t" style="left:944.37px;top:517.92px;font-family:'Liberation Mono',monospace;font-size:24.5px;line-height:24.5px;color:#d4d4d4;font-weight:normal;letter-spacing:-0.73px;">(</div>
<div class="a t" style="left:958.34px;top:517.92px;font-family:'Liberation Mono',monospace;font-size:24.5px;line-height:24.5px;color:#9cdcfe;font-weight:normal;letter-spacing:-0.73px;">name</div>
<div class="a t" style="left:1014.22px;top:517.92px;font-family:'Liberation Mono',monospace;font-size:24.5px;line-height:24.5px;color:#d4d4d4;font-weight:normal;letter-spacing:-0.73px;">);</div>
<div class="a t" style="left:571.56px;top:552.72px;font-family:'Liberation Mono',monospace;font-size:24.5px;line-height:24.5px;color:#858585;font-weight:normal;letter-spacing:-0.73px;">13</div>
<div class="a t" style="left:651px;top:552.72px;font-family:'Liberation Mono',monospace;font-size:24.5px;line-height:24.5px;color:#d4d4d4;font-weight:normal;letter-spacing:-0.73px;">  }</div>
<div class="a t" style="left:571.56px;top:587.52px;font-family:'Liberation Mono',monospace;font-size:24.5px;line-height:24.5px;color:#858585;font-weight:normal;letter-spacing:-0.73px;">14</div>
<div class="a t" style="left:651px;top:587.52px;font-family:'Liberation Mono',monospace;font-size:24.5px;line-height:24.5px;color:#d4d4d4;font-weight:normal;letter-spacing:-0.73px;">}</div>
<div class="a t" style="left:571.56px;top:622.32px;font-family:'Liberation Mono',monospace;font-size:24.5px;line-height:24.5px;color:#858585;font-weight:normal;letter-spacing:-0.73px;">15</div>
<svg class="a" style="left:1109px;top:409px;" width="8" height="20" viewBox="0 0 8 20"><path d="M1 1 L7 1 M4 1 L4 19 M1 19 L7 19" stroke="#d4d4d4" stroke-width="1.2"/></svg>
<div class="a" style="left:1667.0px;top:128.0px;width:7.92px;height:1.4px;background:#c586c0;opacity:0.55;"></div>
<div class="a" style="left:1676.24px;top:128.0px;width:11.88px;height:1.4px;background:#9cdcfe;opacity:0.55;"></div>
<div class="a" style="left:1690.76px;top:128.0px;width:5.28px;height:1.4px;background:#c586c0;opacity:0.55;"></div>
<div class="a" style="left:1697.36px;top:128.0px;width:19.8px;height:1.4px;background:#ce9178;opacity:0.55;"></div>
<div class="a" style="left:1667.0px;top:133.5px;width:15.84px;height:1.4px;background:#dcdcaa;opacity:0.55;"></div>
<div class="a" style="left:1669.64px;top:136.25px;width:11.88px;height:1.4px;background:#9cdcfe;opacity:0.55;"></div>
<div class="a" style="left:1682.84px;top:136.25px;width:13.200000000000001px;height:1.4px;background:#ce9178;opacity:0.55;"></div>
<div class="a" style="left:1669.64px;top:139.0px;width:15.84px;height:1.4px;background:#9cdcfe;opacity:0.55;"></div>
<div class="a" style="left:1686.8px;top:139.0px;width:29.040000000000003px;height:1.4px;background:#ce9178;opacity:0.55;"></div>
<div class="a" style="left:1669.64px;top:141.75px;width:13.200000000000001px;height:1.4px;background:#9cdcfe;opacity:0.55;"></div>
<div class="a" style="left:1684.16px;top:141.75px;width:29.040000000000003px;height:1.4px;background:#ce9178;opacity:0.55;"></div>
<div class="a" style="left:1667.0px;top:144.5px;width:3.96px;height:1.4px;background:#d4d4d4;opacity:0.55;"></div>
<div class="a" style="left:1667.0px;top:147.25px;width:7.92px;height:1.4px;background:#c586c0;opacity:0.55;"></div>
<div class="a" style="left:1676.24px;top:147.25px;width:6.6000000000000005px;height:1.4px;background:#569cd6;opacity:0.55;"></div>
<div class="a" style="left:1684.16px;top:147.25px;width:15.84px;height:1.4px;background:#4ec9b0;opacity:0.55;"></div>
<div class="a" style="left:1669.64px;top:150.0px;width:10.56px;height:1.4px;background:#9cdcfe;opacity:0.55;"></div>
<div class="a" style="left:1681.52px;top:150.0px;width:7.92px;height:1.4px;background:#4ec9b0;opacity:0.55;"></div>
<div class="a" style="left:1693.4px;top:150.0px;width:6.6000000000000005px;height:1.4px;background:#ce9178;opacity:0.55;"></div>
<div class="a" style="left:1702.64px;top:150.0px;width:10.56px;height:1.4px;background:#ce9178;opacity:0.55;"></div>
<div class="a" style="left:1715.84px;top:150.0px;width:7.92px;height:1.4px;background:#ce9178;opacity:0.55;"></div>
<div class="a" style="left:1669.64px;top:155.5px;width:19.8px;height:1.4px;background:#dcdcaa;opacity:0.55;"></div>
<div class="a" style="left:1690.76px;top:155.5px;width:6.6000000000000005px;height:1.4px;background:#9cdcfe;opacity:0.55;"></div>
<div class="a" style="left:1698.68px;top:155.5px;width:9.24px;height:1.4px;background:#4ec9b0;opacity:0.55;"></div>
<div class="a" style="left:1672.28px;top:158.25px;width:6.6000000000000005px;height:1.4px;background:#569cd6;opacity:0.55;"></div>
<div class="a" style="left:1678.88px;top:158.25px;width:10.56px;height:1.4px;background:#9cdcfe;opacity:0.55;"></div>
<div class="a" style="left:1689.44px;top:158.25px;width:5.28px;height:1.4px;background:#dcdcaa;opacity:0.55;"></div>
<div class="a" style="left:1696.04px;top:158.25px;width:6.6000000000000005px;height:1.4px;background:#9cdcfe;opacity:0.55;"></div>
<div class="a" style="left:1669.64px;top:161.0px;width:1.32px;height:1.4px;background:#d4d4d4;opacity:0.55;"></div>
<div class="a" style="left:1667.0px;top:163.75px;width:1.32px;height:1.4px;background:#d4d4d4;opacity:0.55;"></div>
<div class="a" style="left:1761px;top:127px;width:1px;height:530px;background:#262626;"></div>
<div class="a" style="left:1761px;top:127px;width:28px;height:274px;background:#434343;"></div>
<div class="a" style="left:1761px;top:290px;width:9px;height:72px;background:#2f6aa8;"></div>
<div class="a" style="left:1761px;top:325px;width:28px;height:2px;background:#a8a8a8;"></div>
<div class="a" style="left:523px;top:657px;width:1266px;height:291px;background:#1e1e1e;"></div>
<div class="a" style="left:523px;top:657px;width:1266px;height:2px;background:#3a3a3a;"></div>
<div class="a t" style="left:563px;top:683.02px;font-family:'Liberation Sans',sans-serif;font-size:21px;line-height:21px;color:#9a9a9a;font-weight:normal;letter-spacing:-1.3px;">PROBLEMS</div>
<div class="a t" style="left:708.5px;top:683.02px;font-family:'Liberation Sans',sans-serif;font-size:21px;line-height:21px;color:#e8e8e8;font-weight:normal;letter-spacing:-1.15px;">TERMINAL</div>
<div class="a" style="left:708px;top:718px;width:98px;height:2px;background:#6a6a6a;"></div>
<svg class="a" style="left:860px;top:688px;" width="26" height="10" viewBox="0 0 26 10"><circle cx="3.5" cy="5" r="3" fill="#d0d0d0"/><circle cx="12.5" cy="5" r="3" fill="#d0d0d0"/><circle cx="21.5" cy="5" r="3" fill="#d0d0d0"/></svg>
<div class="a" style="left:1150px;top:676px;width:309px;height:33px;background:#3a3a3a;border-radius:4px;"></div>
<div class="a t" style="left:1167px;top:682.97px;font-family:'Liberation Sans',sans-serif;font-size:20px;line-height:20px;color:#e0e0e0;font-weight:normal;letter-spacing:-0.3px;">1: node</div>
<svg class="a" style="left:1438px;top:682px;" width="12" height="20" viewBox="0 0 12 20"><path d="M1.5 8 L6 1.5 L10.5 8 Z M1.5 12 L6 18.5 L10.5 12 Z" fill="#e0e0e0"/></svg>
<svg class="a" style="left:1494px;top:681px;" width="25" height="25" viewBox="0 0 25 25"><path d="M12.5 1 L12.5 24 M1 12.5 L24 12.5" stroke="#cacaca" stroke-width="6"/></svg>
<svg class="a" style="left:1554.5px;top:681.7px;" width="27" height="23" viewBox="0 0 27 23"><path fill-rule="evenodd" d="M0 0 H26.7 V23 H0 Z M2.6 6 V20.4 H12 V6 Z M14.7 6 V20.4 H24.1 V6 Z" fill="#c8c8c8"/></svg>
<svg class="a" style="left:1618px;top:679px;" width="22" height="28" viewBox="0 0 22 28"><path d="M0.5 4.5 L21.5 4.5 L21.5 6.5 L0.5 6.5 Z M6.5 4.5 L6.5 1.5 Q6.5 0.5 7.5 0.5 L14.5 0.5 Q15.5 0.5 15.5 1.5 L15.5 4.5 L13.5 4.5 L13.5 2.5 L8.5 2.5 L8.5 4.5 Z M2 7 L20 7 L19.5 26 Q19.5 27 18.5 27 L3.5 27 Q2.5 27 2.5 26 Z" fill="#c8c8c8"/><path d="M7.2 10.5 L7.2 23.5 M11 10.5 L11 23.5 M14.8 10.5 L14.8 23.5" stroke="#1e1e1e" stroke-width="1.6"/></svg>
<svg class="a" style="left:1677px;top:683px;" width="30" height="18" viewBox="0 0 30 18"><path d="M2 16 L15 3 L28 16" stroke="#cfcfcf" stroke-width="3.2" fill="none"/></svg>
<svg class="a" style="left:1743px;top:682px;" width="22" height="22" viewBox="0 0 22 22"><path d="M2.5 2.5 L19.5 19.5 M19.5 2.5 L2.5 19.5" stroke="#d8d8d8" stroke-width="4.5"/></svg>
<div class="a t" style="left:563.3px;top:729.49px;font-family:'Liberation Mono',monospace;font-size:23.5px;line-height:23.5px;color:#cccccc;font-weight:normal;letter-spacing:-0.5px;"> 92% after chunk asset optimization SourceMapDevToolPlugin runtime.js generate SourceMa</div>
<div class="a t" style="left:563.3px;top:783.69px;font-family:'Liberation Mono',monospace;font-size:23.5px;line-height:23.5px;color:#cccccc;font-weight:normal;letter-spacing:-0.5px;">Date: </div>
<div class="a t" style="left:644.9px;top:783.69px;font-family:'Liberation Mono',monospace;font-size:23.5px;line-height:23.5px;color:#e8e8e8;font-weight:bold;letter-spacing:-0.5px;">2019-01-03T16:22:37.303Z</div>
<div class="a t" style="left:971.3px;top:783.69px;font-family:'Liberation Mono',monospace;font-size:23.5px;line-height:23.5px;color:#cccccc;font-weight:normal;letter-spacing:-0.5px;"> - Hash: </div>
<div class="a t" style="left:1093.7px;top:783.69px;font-family:'Liberation Mono',monospace;font-size:23.5px;line-height:23.5px;color:#e8e8e8;font-weight:bold;letter-spacing:-0.5px;">a10e01d6b1d06899e746</div>
<div class="a t" style="left:1365.7px;top:783.69px;font-family:'Liberation Mono',monospace;font-size:23.5px;line-height:23.5px;color:#cccccc;font-weight:normal;letter-spacing:-0.5px;"> - Time: </div>
<div class="a t" style="left:1488.1px;top:783.69px;font-family:'Liberation Mono',monospace;font-size:23.5px;line-height:23.5px;color:#e8e8e8;font-weight:bold;letter-spacing:-0.5px;">428</div>
<div class="a t" style="left:1528.9px;top:783.69px;font-family:'Liberation Mono',monospace;font-size:23.5px;line-height:23.5px;color:#cccccc;font-weight:normal;letter-spacing:-0.5px;">ms</div>
<div class="a t" style="left:563.3px;top:811.19px;font-family:'Liberation Mono',monospace;font-size:23.5px;line-height:23.5px;color:#cccccc;font-weight:normal;letter-spacing:-0.5px;">4 unchanged chunks</div>
<div class="a t" style="left:563.3px;top:838.69px;font-family:'Liberation Mono',monospace;font-size:23.5px;line-height:23.5px;color:#cccccc;font-weight:normal;letter-spacing:-0.5px;">chunk {</div>
<div class="a t" style="left:658.5px;top:838.69px;font-family:'Liberation Mono',monospace;font-size:23.5px;line-height:23.5px;color:#e5e510;font-weight:bold;letter-spacing:-0.5px;">main</div>
<div class="a t" style="left:712.9px;top:838.69px;font-family:'Liberation Mono',monospace;font-size:23.5px;line-height:23.5px;color:#cccccc;font-weight:normal;letter-spacing:-0.5px;">} </div>
<div class="a t" style="left:740.1px;top:838.69px;font-family:'Liberation Mono',monospace;font-size:23.5px;line-height:23.5px;color:#13b985;font-weight:bold;letter-spacing:-0.5px;">main.js, main.js.map</div>
<div class="a t" style="left:1012.1px;top:838.69px;font-family:'Liberation Mono',monospace;font-size:23.5px;line-height:23.5px;color:#cccccc;font-weight:normal;letter-spacing:-0.5px;"> (main) 14.4 kB </div>
<div class="a t" style="left:1229.7px;top:838.69px;font-family:'Liberation Mono',monospace;font-size:23.5px;line-height:23.5px;color:#e5e510;font-weight:bold;letter-spacing:-0.5px;">[initial]</div>
<div class="a t" style="left:1365.7px;top:838.69px;font-family:'Liberation Mono',monospace;font-size:23.5px;line-height:23.5px;color:#13b985;font-weight:bold;letter-spacing:-0.5px;">[rendered]</div>
<div class="a t" style="left:563.3px;top:866.19px;font-family:'Liberation Mono',monospace;font-size:23.5px;line-height:23.5px;color:#2472c8;font-weight:bold;letter-spacing:-0.5px;">i</div>
<div class="a t" style="left:604.1px;top:866.19px;font-family:'Liberation Mono',monospace;font-size:23.5px;line-height:23.5px;color:#7a7a7a;font-weight:normal;letter-spacing:-0.5px;">wdm</div>
<div class="a t" style="left:658.5px;top:866.19px;font-family:'Liberation Mono',monospace;font-size:23.5px;line-height:23.5px;color:#cccccc;font-weight:normal;letter-spacing:-0.5px;">: Compiled successfully.</div>
<div class="a t" style="left:563.3px;top:893.69px;font-family:'Liberation Mono',monospace;font-size:23.5px;line-height:23.5px;color:#2472c8;font-weight:bold;letter-spacing:-0.5px;">i</div>
<div class="a t" style="left:604.1px;top:893.69px;font-family:'Liberation Mono',monospace;font-size:23.5px;line-height:23.5px;color:#7a7a7a;font-weight:normal;letter-spacing:-0.5px;">wdm</div>
<div class="a t" style="left:658.5px;top:893.69px;font-family:'Liberation Mono',monospace;font-size:23.5px;line-height:23.5px;color:#cccccc;font-weight:normal;letter-spacing:-0.5px;">: Compiling...</div>
<div class="a t" style="left:563.3px;top:920.29px;font-family:'Liberation Mono',monospace;font-size:23.5px;line-height:23.5px;color:#cccccc;font-weight:normal;letter-spacing:-0.5px;"> 10% building modules 0/1 modules 1 active ...demy/ng-refresher/src/app/app.module.ts</div>
<svg class="a" style="left:594.5px;top:865.2px;" width="10" height="24" viewBox="0 0 10 24"><path d="M9 1 L1.5 1 L1.5 22" stroke="#7a7a7a" stroke-width="1.5" fill="none"/></svg>
<svg class="a" style="left:642.9px;top:865.2px;" width="10" height="24" viewBox="0 0 10 24"><path d="M8.5 2 L8.5 23 L1 23" stroke="#7a7a7a" stroke-width="1.5" fill="none"/></svg>
<svg class="a" style="left:594.5px;top:892.7px;" width="10" height="24" viewBox="0 0 10 24"><path d="M9 1 L1.5 1 L1.5 22" stroke="#7a7a7a" stroke-width="1.5" fill="none"/></svg>
<svg class="a" style="left:642.9px;top:892.7px;" width="10" height="24" viewBox="0 0 10 24"><path d="M8.5 2 L8.5 23 L1 23" stroke="#7a7a7a" stroke-width="1.5" fill="none"/></svg>
<div class="a" style="left:1718px;top:918px;width:15px;height:26px;border:2px solid #d0d0d0;"></div>
<svg class="a" style="left:1586px;top:882px;" width="16" height="24" viewBox="0 0 16 24"><path d="M1.5 1.5 L1.5 19 L5.5 15 L9 22 L11.5 21 L8 14 L13.5 14 Z" fill="#505050" stroke="#e0e0e0" stroke-width="1.3" stroke-linejoin="round"/></svg>
<div class="a" style="left:131px;top:948px;width:1658px;height:44px;background:#066bd1;"></div>
<div class="a" style="left:131px;top:990px;width:1658px;height:2px;background:#0a4fa0;"></div>
<div class="a" style="left:131px;top:948px;width:1658px;height:1px;background:#0d4d8c;"></div>
<svg class="a" style="left:158px;top:957px;" width="20" height="26" viewBox="0 0 20 26"><circle cx="4" cy="4" r="2.6" stroke="#fff" stroke-width="1.8" fill="none"/><circle cx="4" cy="22" r="2.6" stroke="#fff" stroke-width="1.8" fill="none"/><circle cx="16" cy="7" r="2.6" stroke="#fff" stroke-width="1.8" fill="none"/><path d="M4 6.6 L4 19.4 M16 9.6 Q16 15 6 19.5" stroke="#fff" stroke-width="1.8" fill="none"/></svg>
<div class="a t" style="left:182px;top:960.18px;font-family:'Liberation Sans',sans-serif;font-size:22px;line-height:22px;color:#ffffff;font-weight:normal;letter-spacing:-0.3px;">master</div>
<svg class="a" style="left:273px;top:960px;" width="22" height="22" viewBox="0 0 22 22"><circle cx="11" cy="11" r="10.5" fill="#fff"/><path d="M6.5 6.5 L15.5 15.5 M15.5 6.5 L6.5 15.5" stroke="#066bd1" stroke-width="2.6"/></svg>
<div class="a t" style="left:303px;top:960.18px;font-family:'Liberation Sans',sans-serif;font-size:22px;line-height:22px;color:#ffffff;font-weight:normal;letter-spacing:0px;">0</div>
<svg class="a" style="left:325px;top:957px;" width="22" height="24" viewBox="0 0 22 24"><path d="M11 1 L21.5 22.5 L0.5 22.5 Z" fill="#fff"/><path d="M11 8 L11 16" stroke="#066bd1" stroke-width="2.6"/><circle cx="11" cy="19.3" r="1.5" fill="#066bd1"/></svg>
<div class="a t" style="left:356px;top:960.18px;font-family:'Liberation Sans',sans-serif;font-size:22px;line-height:22px;color:#ffffff;font-weight:normal;letter-spacing:0px;">0</div>
<div class="a t" style="left:775px;top:960.18px;font-family:'Liberation Sans',sans-serif;font-size:22px;line-height:22px;color:#ffffff;font-weight:normal;letter-spacing:-0.25px;">Ln 12, Col 29</div>
<div class="a t" style="left:932px;top:960.18px;font-family:'Liberation Sans',sans-serif;font-size:22px;line-height:22px;color:#ffffff;font-weight:normal;letter-spacing:-0.25px;">Spaces: 2</div>
<div class="a t" style="left:1057.5px;top:960.18px;font-family:'Liberation Sans',sans-serif;font-size:22px;line-height:22px;color:#ffffff;font-weight:normal;letter-spacing:-0.25px;">UTF-8</div>
<div class="a t" style="left:1152px;top:960.18px;font-family:'Liberation Sans',sans-serif;font-size:22px;line-height:22px;color:#ffffff;font-weight:normal;letter-spacing:-0.25px;">LF</div>
<div class="a t" style="left:1206.5px;top:960.18px;font-family:'Liberation Sans',sans-serif;font-size:22px;line-height:22px;color:#ffffff;font-weight:normal;letter-spacing:-0.25px;">TypeScript</div>
<div class="a t" style="left:1341.5px;top:960.18px;font-family:'Liberation Sans',sans-serif;font-size:22px;line-height:22px;color:#ffffff;font-weight:normal;letter-spacing:-0.25px;">3.2.2</div>
<div class="a t" style="left:1454px;top:960.18px;font-family:'Liberation Sans',sans-serif;font-size:22px;line-height:22px;color:#ffffff;font-weight:normal;letter-spacing:-0.25px;">TSLint</div>
<div class="a t" style="left:1546.4px;top:960.18px;font-family:'Liberation Sans',sans-serif;font-size:22px;line-height:22px;color:#ffffff;font-weight:normal;letter-spacing:-0.25px;">Prettier:</div>
<svg class="a" style="left:1421px;top:957px;" width="27" height="24" viewBox="0 0 27 24"><path d="M13.5 1 L26.5 23 L0.5 23 Z" fill="#fff"/><path d="M13.5 8.5 L13.5 16" stroke="#066bd1" stroke-width="3"/><circle cx="13.5" cy="19.6" r="1.7" fill="#066bd1"/></svg>
<svg class="a" style="left:1627px;top:963px;" width="20" height="17" viewBox="0 0 20 17"><path d="M2 8.5 L7.5 14.5 L18.5 2.5" stroke="#fff" stroke-width="3.2" fill="none"/></svg>
<svg class="a" style="left:1678px;top:957px;" width="27" height="27" viewBox="0 0 27 27"><circle cx="13.5" cy="13.5" r="13" fill="#fff"/><circle cx="9" cy="10" r="2" fill="#066bd1"/><circle cx="18" cy="10" r="2" fill="#066bd1"/><path d="M7 15.5 Q13.5 22 20 15.5" stroke="#066bd1" stroke-width="2.2" fill="none"/></svg>
<svg class="a" style="left:1716px;top:955px;" width="70" height="30" viewBox="0 0 70 30"><path d="M3 10 Q1 22 6 22 Q10 22 12 12 Q11 24 15 22 Q19 20 21 8" stroke="#9cc3ee" stroke-width="3" fill="none" opacity="0.9"/><path d="M30 4 Q37 4 38 12 L39 20 L42 23 L18 23 L21 20 L22 12 Q23 4 30 4 Z" fill="#f2f6fb"/><circle cx="30" cy="26" r="3" fill="#cfe3f7"/><text x="35" y="21" font-family="Liberation Sans" font-size="12" font-weight="bold" fill="#a9c9ec" textLength="31">demy</text></svg>
<div class="a" style="left:0px;top:992px;width:1920px;height:51px;background:#eff0f1;"></div>
<div class="a" style="left:0px;top:992px;width:1920px;height:2px;background:#fbfbfb;"></div>
<div class="a t" style="left:10px;top:994.60px;font-family:'Liberation Sans',sans-serif;font-size:13px;line-height:13px;color:#31363b;font-weight:normal;letter-spacing:0.2px;">03:39</div>
<div class="a" style="left:60px;top:996.5px;width:1802px;height:8.5px;background:linear-gradient(#bdbdbd,#d2d2d2);border-radius:4px;"></div>
<div class="a" style="left:60px;top:996.5px;width:1665px;height:8.5px;background:linear-gradient(#2a86e0,#2a7ccf);border-radius:4px;"></div>
<div class="a t" style="left:1880px;top:994.60px;font-family:'Liberation Sans',sans-serif;font-size:13px;line-height:13px;color:#31363b;font-weight:normal;letter-spacing:0.2px;">03:58</div>
<div class="a" style="left:4px;top:1012px;width:30px;height:29px;border:1px solid #b9babb;border-radius:3px;background:linear-gradient(#f3f3f4,#e9eaeb);box-shadow:0 1px 1px rgba(0,0,0,0.12);"></div>
<svg class="a" style="left:4px;top:1012px;" width="30" height="29" viewBox="0 0 30 29"><path d="M8.5 7 L22 15.2 L8.5 23.4 Z" fill="#717171"/></svg>
<div class="a" style="left:48px;top:1015px;width:24px;height:24px;border:1px solid #b9babb;border-radius:3px;background:linear-gradient(#f3f3f4,#e9eaeb);box-shadow:0 1px 1px rgba(0,0,0,0.12);"></div>
<svg class="a" style="left:48px;top:1015px;" width="24" height="24" viewBox="0 0 24 24"><path d="M4.5 6.5 L7.5 6.5 L7.5 17.5 L4.5 17.5 Z M19 6.5 L19 17.5 L13.5 12 Z M13.5 6.5 L13.5 17.5 L8 12 Z" fill="#6f6f6f"/></svg>
<div class="a" style="left:74px;top:1015px;width:24px;height:24px;border:1px solid #b9babb;border-radius:3px;background:linear-gradient(#f3f3f4,#e9eaeb);box-shadow:0 1px 1px rgba(0,0,0,0.12);"></div>
<svg class="a" style="left:74px;top:1015px;" width="24" height="24" viewBox="0 0 24 24"><rect x="6.5" y="6.5" width="10" height="10" fill="#6f6f6f"/></svg>
<div class="a" style="left:100px;top:1015px;width:24px;height:24px;border:1px solid #b9babb;border-radius:3px;background:linear-gradient(#f3f3f4,#e9eaeb);box-shadow:0 1px 1px rgba(0,0,0,0.12);"></div>
<svg class="a" style="left:100px;top:1015px;" width="24" height="24" viewBox="0 0 24 24"><path d="M16.5 6.5 L19.5 6.5 L19.5 17.5 L16.5 17.5 Z M5 6.5 L5 17.5 L10.5 12 Z M10.5 6.5 L10.5 17.5 L16 12 Z" fill="#6f6f6f"/></svg>
<div class="a" style="left:138px;top:1015px;width:24px;height:24px;border:1px solid #b9babb;border-radius:3px;background:linear-gradient(#f3f3f4,#e9eaeb);box-shadow:0 1px 1px rgba(0,0,0,0.12);"></div>
<svg class="a" style="left:138px;top:1015px;" width="24" height="24" viewBox="0 0 24 24"><path d="M4.5 9 L4.5 5 L8.5 5 M15.5 5 L19.5 5 L19.5 9 M19.5 15 L19.5 19 L15.5 19 M8.5 19 L4.5 19 L4.5 15" stroke="#6f6f6f" stroke-width="2.2" fill="none"/></svg>
<div class="a" style="left:164px;top:1015px;width:24px;height:24px;border:1px solid #b9babb;border-radius:3px;background:linear-gradient(#f3f3f4,#e9eaeb);box-shadow:0 1px 1px rgba(0,0,0,0.12);"></div>
<svg class="a" style="left:164px;top:1015px;" width="24" height="24" viewBox="0 0 24 24"><path d="M6 5 L6 19 M12 5 L12 19 M18 5 L18 19" stroke="#6f6f6f" stroke-width="2"/><circle cx="6" cy="7.5" r="2" fill="#6f6f6f"/><circle cx="12" cy="15.5" r="2" fill="#6f6f6f"/><circle cx="18" cy="11.5" r="2" fill="#6f6f6f"/></svg>
<div class="a" style="left:202px;top:1015px;width:24px;height:24px;border:1px solid #b9babb;border-radius:3px;background:linear-gradient(#f3f3f4,#e9eaeb);box-shadow:0 1px 1px rgba(0,0,0,0.12);"></div>
<svg class="a" style="left:202px;top:1015px;" width="24" height="24" viewBox="0 0 24 24"><path d="M5 6.5 L19 6.5 M5 11 L19 11 M5 15.5 L13 15.5" stroke="#6f6f6f" stroke-width="2"/><path d="M14.5 13 L18.5 15.8 L14.5 18.5 Z" fill="#6f6f6f"/></svg>
<div class="a" style="left:228px;top:1015px;width:24px;height:24px;border:1px solid #b9babb;border-radius:3px;background:linear-gradient(#f3f3f4,#e9eaeb);box-shadow:0 1px 1px rgba(0,0,0,0.12);"></div>
<svg class="a" style="left:228px;top:1015px;" width="24" height="24" viewBox="0 0 24 24"><path d="M5.5 11 Q5.5 7 9.5 7 L17 7 M18.5 13 Q18.5 17 14.5 17 L7 17" stroke="#6f6f6f" stroke-width="2.2" fill="none"/><path d="M16 4.5 L19.5 7 L16 9.5 Z M8 14.5 L4.5 17 L8 19.5 Z" fill="#6f6f6f"/></svg>
<div class="a" style="left:254px;top:1015px;width:24px;height:24px;border:1px solid #b9babb;border-radius:3px;background:linear-gradient(#f3f3f4,#e9eaeb);box-shadow:0 1px 1px rgba(0,0,0,0.12);"></div>
<svg class="a" style="left:254px;top:1015px;" width="24" height="24" viewBox="0 0 24 24"><path d="M5 5.5 L8.5 8.5 M5 18.5 L18 5.5 M13 14 L18 18.5" stroke="#6f6f6f" stroke-width="2.2" fill="none"/><path d="M14 5 L19 5 L19 10 Z M14 19 L19 19 L19 14 Z" fill="#6f6f6f"/></svg>
<svg class="a" style="left:1819px;top:1028px;" width="16" height="14" viewBox="0 0 16 14"><path d="M1 4.5 L4 4.5 L8 1 L8 13 L4 9.5 L1 9.5 Z" fill="#6f6f6f"/><path d="M10 4.5 Q11.5 7 10 9.5 M12 2.5 Q15 7 12 11.5" stroke="#f39c1a" stroke-width="1.4" fill="none"/></svg>
<svg class="a" style="left:1840px;top:1018px;" width="76" height="24" viewBox="0 0 76 24"><defs><linearGradient id="vg" x1="0" x2="1"><stop offset="0" stop-color="#8be08b"/><stop offset="1" stop-color="#1ec51e"/></linearGradient></defs><path d="M1.5 21.5 L60 6.3 L60 21.5 Z" fill="url(#vg)"/><path d="M1.5 21.5 L72.5 3 L72.5 21.5 Z" stroke="#6a6a6a" stroke-width="1.6" fill="none" stroke-linejoin="round"/></svg>
<div class="a t" style="left:1847px;top:1020.38px;font-family:'Liberation Sans',sans-serif;font-size:9px;line-height:9px;color:#8a8a8a;font-weight:normal;letter-spacing:0px;">100%</div>
<div class="a" style="left:0px;top:1043px;width:1920px;height:37px;background:#dfe7e7;"></div>
<div class="a" style="left:0px;top:1043px;width:1920px;height:2px;background:linear-gradient(#bfc3c4,#d6dcdc);"></div>
<svg class="a" style="left:2px;top:1046px;" width="32" height="32" viewBox="0 0 32 32"><circle cx="16" cy="16" r="14.5" stroke="#1f2426" stroke-width="2.5" fill="#fff" /><path d="M3 13 Q10 4 22 6 Q29 10 27 18 Q20 22 10 18 Q5 16 3 13 Z" fill="#1f2426"/><circle cx="21" cy="12" r="3.5" fill="#fff"/><circle cx="21" cy="12" r="1.8" fill="#1f2426"/><path d="M3 15 Q4 26 16 27 Q24 27 28 20 Q20 25 10 20" fill="#1f2426"/></svg>
<svg class="a" style="left:39px;top:1046px;" width="32" height="32" viewBox="0 0 32 32"><circle cx="16" cy="16" r="11" fill="#7d3fb0"/><path d="M16 5 A11 11 0 0 1 16 27 Z" fill="#6a2a9c"/><path d="M18 9 A7 7 0 0 1 18 23 M18 12 A4 4 0 0 1 18 20" stroke="#f0e0ff" stroke-width="1.3" fill="none"/></svg>
<svg class="a" style="left:73px;top:1046px;" width="32" height="32" viewBox="0 0 32 32"><circle cx="16" cy="16" r="11" fill="#db4437"/><path d="M16 16 L6.5 21.5 A11 11 0 0 0 21.5 25.5 Z" fill="#0f9d58"/><path d="M16 16 L21.5 25.5 A11 11 0 0 0 27 16 L16 16 Z" fill="#f4b400"/><path d="M16 16 L5 16 A11 11 0 0 0 6.5 21.5 Z" fill="#0f9d58"/><circle cx="16" cy="16" r="5" fill="#fff"/><circle cx="16" cy="16" r="4" fill="#4285f4"/></svg>
<svg class="a" style="left:107px;top:1046px;" width="32" height="32" viewBox="0 0 32 32"><rect x="7" y="8" width="18" height="17" fill="#353b3d"/><path d="M14 12.5 L18 16.5 L14 20.5" stroke="#9aa" stroke-width="0.8" fill="none"/></svg>
<svg class="a" style="left:141px;top:1046px;" width="32" height="32" viewBox="0 0 32 32"><rect x="7" y="7" width="18" height="18" fill="#2b3133"/><path d="M7 25 L7 16 L11 13 L14 17 L18 19 L21 18 L25 20 L25 25 Z" fill="#4caf84"/></svg>
<svg class="a" style="left:174px;top:1046px;" width="32" height="32" viewBox="0 0 32 32"><rect x="5" y="7" width="22" height="16" fill="#2e3236"/><rect x="12" y="23" width="8" height="2" fill="#c0c0c0"/><circle cx="22" cy="24" r="2" fill="#e33"/></svg>
<svg class="a" style="left:209px;top:1046px;" width="32" height="32" viewBox="0 0 32 32"><rect x="7" y="7" width="19" height="19" fill="#2e3236"/><path d="M10 13 L23 13 M10 19 L23 19" stroke="#3fa7e8" stroke-width="1.2"/><circle cx="20" cy="13" r="1.5" fill="#fff"/><circle cx="13" cy="19" r="1.5" fill="#fff"/></svg>
<svg class="a" style="left:243px;top:1046px;" width="32" height="32" viewBox="0 0 32 32"><circle cx="16" cy="16" r="9" fill="#4caf6a"/><path d="M11 14 Q16 11 21 14 L20 21 L12 21 Z" fill="#f2f2f2"/></svg>
<svg class="a" style="left:276px;top:1046px;" width="32" height="32" viewBox="0 0 32 32"><rect x="9" y="6" width="15" height="21" rx="1.5" fill="#6c6c6c"/><rect x="9" y="11" width="15" height="8" fill="#3caa4a"/></svg>
<svg class="a" style="left:310px;top:1046px;" width="32" height="32" viewBox="0 0 32 32"><circle cx="16" cy="16" r="9.5" fill="#2d8fe8"/><path d="M11 13 Q16 9 21 12 L15 16 L20 21 Q14 20 12 17" fill="#d8e8f8"/></svg>
<svg class="a" style="left:344px;top:1046px;" width="32" height="32" viewBox="0 0 32 32"><circle cx="16" cy="16" r="8" stroke="#5c6b70" stroke-width="3" fill="none"/><circle cx="16" cy="16" r="4" stroke="#2bb673" stroke-width="2.5" fill="none"/></svg>
<svg class="a" style="left:378px;top:1046px;" width="32" height="32" viewBox="0 0 32 32"><path d="M5 16 Q12 9 21 10 L26 6 L25 15 Q20 21 10 19 Z" fill="#8d7a66"/><circle cx="12" cy="14" r="2.5" fill="#fff"/><path d="M18 18 L27 26" stroke="#5a4a3a" stroke-width="1.5"/></svg>
<svg class="a" style="left:413px;top:1046px;" width="32" height="32" viewBox="0 0 32 32"><rect x="5" y="5" width="22" height="22" rx="5" fill="#f27c1f" stroke="#222" stroke-width="1.5"/><path d="M7 16 Q16 8 25 16 Q16 24 7 16 Z" fill="#fff"/><circle cx="16" cy="16" r="3.5" fill="#3cae3c"/></svg>
<svg class="a" style="left:446px;top:1046px;" width="32" height="32" viewBox="0 0 32 32"><circle cx="16" cy="16" r="9" fill="#fff" stroke="#1ea362" stroke-width="1.5"/><path d="M12 12 L17 15 L12 18 M20 13 L16 16 L20 19" stroke="#1d6fd6" stroke-width="1.5" fill="none"/></svg>
<svg class="a" style="left:481px;top:1046px;" width="32" height="32" viewBox="0 0 32 32"><rect x="7" y="7" width="18" height="18" fill="#2f3a44"/><path d="M10 14 L14 17 L21 10 L21 22 L14 15 L10 18" stroke="#3ba0e8" stroke-width="1.8" fill="none"/></svg>
<svg class="a" style="left:515px;top:1046px;" width="32" height="32" viewBox="0 0 32 32"><rect x="5" y="5" width="21" height="21" rx="2.5" fill="#264b6e"/><path d="M9 9 Q16 10 19 18 Q20 22 22 23" stroke="#b7c9d9" stroke-width="1" fill="none"/></svg>
<svg class="a" style="left:548px;top:1046px;" width="32" height="32" viewBox="0 0 32 32"><circle cx="16" cy="16" r="8.5" fill="#2f80e6"/><path d="M11 16 A2.5 2.5 0 1 0 16 16 A2.5 2.5 0 1 0 21 16 M16 12 L16 20" stroke="#fff" stroke-width="1.3" fill="none"/></svg>
<svg class="a" style="left:582px;top:1046px;" width="32" height="32" viewBox="0 0 32 32"><path d="M7 18 Q7 8 16 8 Q25 8 25 18" stroke="#1e60d8" stroke-width="2.2" fill="none"/><rect x="6" y="16" width="4" height="8" rx="1.5" fill="#1e3f9a"/><rect x="22" y="16" width="4" height="8" rx="1.5" fill="#1e3f9a"/><path d="M12 23 L14 14 L16 22 L18 15 L20 23" stroke="#f09020" stroke-width="1.6" fill="none"/></svg>
<svg class="a" style="left:617px;top:1046px;" width="32" height="32" viewBox="0 0 32 32"><circle cx="19" cy="16" r="5.5" fill="#fff" stroke="#f0822b" stroke-width="3"/><circle cx="19" cy="16" r="2.4" fill="#2f6fb7"/><path d="M5 21 L13 14 M8 12 L15 12" stroke="#f0822b" stroke-width="2.5"/></svg>
<svg class="a" style="left:651px;top:1046px;" width="32" height="32" viewBox="0 0 32 32"><path d="M6 8 L14 8 L16 6 L26 6 L26 24 L6 24 Z" fill="#c62b36"/><text x="10" y="20" font-family="Liberation Sans" font-weight="bold" font-style="italic" font-size="9" fill="#fff">Fz</text></svg>
<svg class="a" style="left:684px;top:1046px;" width="32" height="32" viewBox="0 0 32 32"><circle cx="16" cy="16" r="10" fill="#ff7139"/><path d="M16 6 Q26 6 26 16 Q24 8 18 10 Z" fill="#ffcb2f"/><circle cx="15" cy="17" r="5" fill="#6d3ad0"/></svg>
<div class="a" style="left:719px;top:1046px;width:247px;height:34px;background:#c6cdcd;border-top:3px solid #9ea5a6;"></div>
<svg class="a" style="left:725px;top:1052px;" width="22" height="22" viewBox="0 0 22 22"><path d="M1 3 L8 3 L10 5 L21 5 L21 20 L1 20 Z" fill="#1d78c8"/><rect x="1" y="8" width="20" height="12" fill="#3b9af0"/></svg>
<div class="a t" style="left:752px;top:1056.15px;font-family:'Liberation Sans',sans-serif;font-size:14px;line-height:14px;color:#232627;font-weight:normal;letter-spacing:-0.33px;">60b84280-c743-4fc9-b58b-6293b...</div>
<div class="a" style="left:969px;top:1046px;width:248px;height:34px;background:#b2d8ee;border-top:3px solid #60b2e4;"></div>
<svg class="a" style="left:977px;top:1051px;" width="20" height="22" viewBox="0 0 20 22"><path d="M2 20 L5 13 L15 13 L18 20 Z" fill="#f08a1c"/><path d="M8 2 L12 2 L16 16 L4 16 Z" fill="#f08a1c"/><path d="M6.5 7 L13.5 7 L14.2 10 L5.8 10 Z M5 13 L15 13 L15.5 15.5 L4.5 15.5 Z" fill="#fff"/></svg>
<div class="a t" style="left:1003px;top:1056.15px;font-family:'Liberation Sans',sans-serif;font-size:14px;line-height:14px;color:#232627;font-weight:normal;letter-spacing:-0.37px;">16. Passing Data Up With a Cust...</div>
<div class="a" style="left:1219px;top:1046px;width:247px;height:34px;background:#c6cdcd;border-top:3px solid #9ea5a6;"></div>
<svg class="a" style="left:1225px;top:1052px;" width="22" height="22" viewBox="0 0 22 22"><circle cx="11" cy="11" r="8" fill="#e8e8f0" stroke="#c2185b" stroke-width="2.5"/><circle cx="11" cy="11" r="3.5" fill="#c8c8d8"/></svg>
<div class="a t" style="left:1252px;top:1056.15px;font-family:'Liberation Sans',sans-serif;font-size:14px;line-height:14px;color:#232627;font-weight:normal;letter-spacing:-0.35px;">Screenshot from 2023-08-09 01.1...</div>
<svg class="a" style="left:1480px;top:1046px;" width="32" height="32" viewBox="0 0 32 32"><circle cx="16" cy="17" r="12" fill="#ff6d2c"/><path d="M16 5 Q28 6 28 17 Q26 8 19 9 Z" fill="#ffd13a"/><circle cx="15.5" cy="18" r="6" fill="#6236c8"/><path d="M5 13 Q9 10 12 13 Q9 22 16 24 Q8 25 5 18 Z" fill="#ffb53a"/></svg>
<svg class="a" style="left:1522px;top:1052px;" width="20" height="20" viewBox="0 0 20 20"><path d="M5 15 L5 10 Q5 4 10 4 Q15 4 15 10 L15 15 L17 17 L3 17 Z" stroke="#232627" stroke-width="1.5" fill="none"/><circle cx="10" cy="18.5" r="1.5" fill="#232627"/><path d="M2 6 Q3 3 5 2 M18 6 Q17 3 15 2" stroke="#232627" stroke-width="1.2" fill="none"/></svg>
<div class="a" style="left:1547px;top:1051px;width:22px;height:22px;background:#ee3f37;"></div>
<svg class="a" style="left:1547px;top:1051px;" width="22" height="22" viewBox="0 0 22 22"><path d="M4 11 L9 6 L14 11 L9 16 Z" fill="#fff"/><path d="M12 6 L17 11 L12 16" stroke="#fff" stroke-width="2.2" fill="none"/></svg>
<div class="a t" style="left:1575px;top:1057.00px;font-family:'Liberation Sans',sans-serif;font-size:13px;line-height:13px;color:#3a4a9a;font-weight:bold;letter-spacing:0px;">EN</div>
<svg class="a" style="left:1600px;top:1052px;" width="20" height="20" viewBox="0 0 20 20"><circle cx="10" cy="10" r="7.5" stroke="#232627" stroke-width="1.5" fill="none"/><path d="M8 7 L8 13 M12 7 L12 13" stroke="#232627" stroke-width="1.8"/></svg>
<svg class="a" style="left:1626px;top:1051px;" width="20" height="22" viewBox="0 0 20 22"><path d="M3 19 L17 19 M6 18 L9 3 L11 3 L14 18 M7.5 10 L12.5 10 M6.5 14 L13.5 14" stroke="#232627" stroke-width="1.6" fill="none"/></svg>
<svg class="a" style="left:1652px;top:1052px;" width="20" height="20" viewBox="0 0 20 20"><rect x="3" y="4" width="14" height="15" stroke="#232627" stroke-width="1.5" fill="none"/><rect x="6" y="2" width="8" height="4" fill="#232627"/><path d="M6 10 L14 10 M6 13 L14 13 M6 16 L11 16" stroke="#232627" stroke-width="1.2"/></svg>
<svg class="a" style="left:1677px;top:1052px;" width="20" height="20" viewBox="0 0 20 20"><path d="M2 7 L6 7 L11 3 L11 17 L6 13 L2 13 Z" fill="#232627"/><path d="M13.5 7 Q15.5 10 13.5 13 M15.5 4.5 Q19 10 15.5 15.5" stroke="#232627" stroke-width="1.5" fill="none"/></svg>
<svg class="a" style="left:1701px;top:1053px;" width="22" height="18" viewBox="0 0 22 18"><rect x="0" y="1" width="21" height="14" fill="#fff"/><rect x="0" y="1.0" width="21" height="1.1" fill="#d22"/><rect x="0" y="3.15" width="21" height="1.1" fill="#d22"/><rect x="0" y="5.3" width="21" height="1.1" fill="#d22"/><rect x="0" y="7.449999999999999" width="21" height="1.1" fill="#d22"/><rect x="0" y="9.6" width="21" height="1.1" fill="#d22"/><rect x="0" y="11.75" width="21" height="1.1" fill="#d22"/><rect x="0" y="13.899999999999999" width="21" height="1.1" fill="#d22"/><rect x="0" y="1" width="9" height="7.5" fill="#2a3aa0"/></svg>
<svg class="a" style="left:1728px;top:1052px;" width="24" height="20" viewBox="0 0 24 20"><path d="M2 8 Q12 -1 22 8 M5.5 11 Q12 5 18.5 11 M9 14 Q12 11.5 15 14" stroke="#232627" stroke-width="1.3" fill="none"/><circle cx="12" cy="17" r="1.5" stroke="#232627" stroke-width="1.2" fill="none"/></svg>
<svg class="a" style="left:1756px;top:1054px;" width="16" height="14" viewBox="0 0 16 14"><path d="M2 11 L8 4 L14 11 Z" fill="#232627"/></svg>
<div class="a t" style="left:1789px;top:1050.26px;font-family:'Liberation Sans',sans-serif;font-size:24.5px;line-height:24.5px;color:#232627;font-weight:normal;letter-spacing:-0.6px;">1:21 AM</div>
<svg class="a" style="left:1888px;top:1049px;" width="28" height="27" viewBox="0 0 28 27"><rect x="1" y="1" width="25" height="24" stroke="#232627" stroke-width="1.5" fill="none"/><path d="M4 21 L23 21" stroke="#232627" stroke-width="1.5"/></svg>
</body></html>
